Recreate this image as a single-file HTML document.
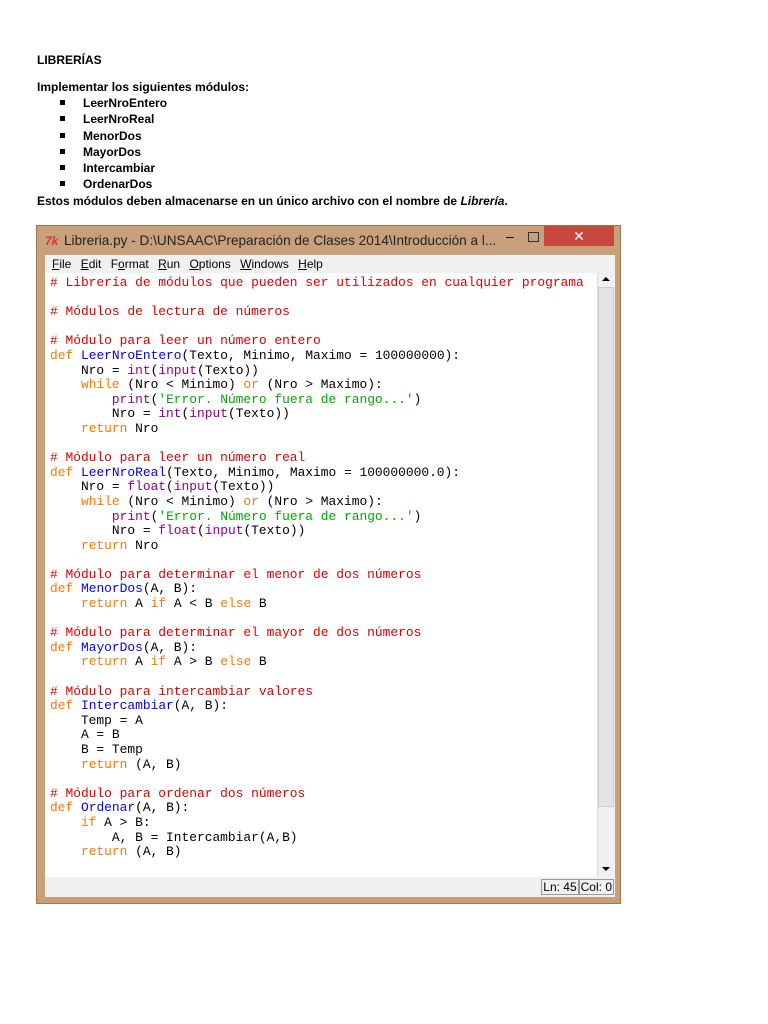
<!DOCTYPE html>
<html><head><meta charset="utf-8"><style>
body{margin:0;width:768px;height:1024px;background:#fff;position:relative;overflow:hidden;font-family:"Liberation Sans",sans-serif}
.t{position:absolute;font-weight:bold;font-size:12px;color:#000;white-space:nowrap;line-height:14px}
.b{position:absolute;left:60px;width:5px;height:5px;background:#000}
#win{position:absolute;left:36px;top:225px;width:585px;height:679px;background:#c9a07c;box-sizing:border-box;border:1px solid #a07850}
#title{position:absolute;left:27px;top:7px;font-size:13.6px;color:#222;white-space:nowrap}
#close{position:absolute;left:507px;top:0;width:70px;height:20px;background:#c7473c;color:#fff;font-size:14px;text-align:center;line-height:20px}
#inner{position:absolute;left:8px;top:29px;width:570px;height:642px;background:#f0f0f0}
#menu{position:absolute;left:7px;top:2px;font-size:12px;color:#000;word-spacing:6px}
#code{position:absolute;left:0;top:18px;width:552px;height:604px;background:#fff}
#sb{position:absolute;left:552px;top:18px;width:17px;height:604px;background:#f0f0f0;border-left:1px solid #ddd}
pre{margin:0;position:absolute;left:5px;top:3px;font-family:"Liberation Mono",monospace;font-size:12.9px;line-height:14.6px;color:#000}
.c{color:#dd0000}.k{color:#ff7700}.f{color:#0000ff}.p{color:#900090}.s{color:#00aa00}
#status{position:absolute;right:1px;top:625px;font-size:12px;white-space:nowrap}
#status span{border:1px solid #999;padding:0 1px;background:#f0f0f0}
</style></head><body>
<div class="t" style="left:37px;top:53px">LIBRERÍAS</div>
<div class="t" style="left:37px;top:80px">Implementar los siguientes módulos:</div>
<div class="b" style="top:100px"></div><div class="t" style="left:83px;top:96px">LeerNroEntero</div>
<div class="b" style="top:116px"></div><div class="t" style="left:83px;top:112px">LeerNroReal</div>
<div class="b" style="top:133px"></div><div class="t" style="left:83px;top:129px">MenorDos</div>
<div class="b" style="top:149px"></div><div class="t" style="left:83px;top:145px">MayorDos</div>
<div class="b" style="top:165px"></div><div class="t" style="left:83px;top:161px">Intercambiar</div>
<div class="b" style="top:181px"></div><div class="t" style="left:83px;top:177px">OrdenarDos</div>
<div class="t" style="left:37px;top:194px">Estos módulos deben almacenarse en un único archivo con el nombre de <i>Librería</i>.</div>
<div id="win">
<div style="position:absolute;left:8px;top:8px;color:#d33;font-weight:bold;font-size:12px;font-style:italic">7k</div>
<div id="title">Libreria.py - D:\UNSAAC\Preparación de Clases 2014\Introducción a l...</div>
<div style="position:absolute;left:469px;top:2px;font-size:14px">–</div>
<div style="position:absolute;left:491px;top:6px;width:9px;height:8px;border:1px solid #333"></div>
<div id="close">✕</div>
<div id="inner">
<div id="menu"><u>F</u>ile <u>E</u>dit F<u>o</u>rmat <u>R</u>un <u>O</u>ptions <u>W</u>indows <u>H</u>elp</div>
<div id="code"><pre><span class="c"># Librería de módulos que pueden ser utilizados en cualquier programa</span>

<span class="c"># Módulos de lectura de números</span>

<span class="c"># Módulo para leer un número entero</span>
<span class="k">def</span> <span class="f">LeerNroEntero</span>(Texto, Minimo, Maximo = 100000000):
    Nro = <span class="p">int</span>(<span class="p">input</span>(Texto))
    <span class="k">while</span> (Nro &lt; Minimo) <span class="k">or</span> (Nro &gt; Maximo):
        <span class="p">print</span>(<span class="s">'Error. Número fuera de rango...'</span>)
        Nro = <span class="p">int</span>(<span class="p">input</span>(Texto))
    <span class="k">return</span> Nro

<span class="c"># Módulo para leer un número real</span>
<span class="k">def</span> <span class="f">LeerNroReal</span>(Texto, Minimo, Maximo = 100000000.0):
    Nro = <span class="p">float</span>(<span class="p">input</span>(Texto))
    <span class="k">while</span> (Nro &lt; Minimo) <span class="k">or</span> (Nro &gt; Maximo):
        <span class="p">print</span>(<span class="s">'Error. Número fuera de rango...'</span>)
        Nro = <span class="p">float</span>(<span class="p">input</span>(Texto))
    <span class="k">return</span> Nro

<span class="c"># Módulo para determinar el menor de dos números</span>
<span class="k">def</span> <span class="f">MenorDos</span>(A, B):
    <span class="k">return</span> A <span class="k">if</span> A &lt; B <span class="k">else</span> B

<span class="c"># Módulo para determinar el mayor de dos números</span>
<span class="k">def</span> <span class="f">MayorDos</span>(A, B):
    <span class="k">return</span> A <span class="k">if</span> A &gt; B <span class="k">else</span> B

<span class="c"># Módulo para intercambiar valores</span>
<span class="k">def</span> <span class="f">Intercambiar</span>(A, B):
    Temp = A
    A = B
    B = Temp
    <span class="k">return</span> (A, B)

<span class="c"># Módulo para ordenar dos números</span>
<span class="k">def</span> <span class="f">Ordenar</span>(A, B):
    <span class="k">if</span> A &gt; B:
        A, B = Intercambiar(A,B)
    <span class="k">return</span> (A, B)</pre></div>
<div id="sb">
<div style="position:absolute;left:4px;top:4px;width:0;height:0;border-left:4px solid transparent;border-right:4px solid transparent;border-bottom:4px solid #000"></div>
<div style="position:absolute;left:0;top:14px;width:16px;height:520px;background:#e4e4e4;border:1px solid #ccc;box-sizing:border-box"></div>
<div style="position:absolute;left:4px;top:594px;width:0;height:0;border-left:4px solid transparent;border-right:4px solid transparent;border-top:4px solid #000"></div>
</div>
<div id="status"><span>Ln: 45</span><span>Col: 0</span></div>
</div>
</div>
</body></html>
